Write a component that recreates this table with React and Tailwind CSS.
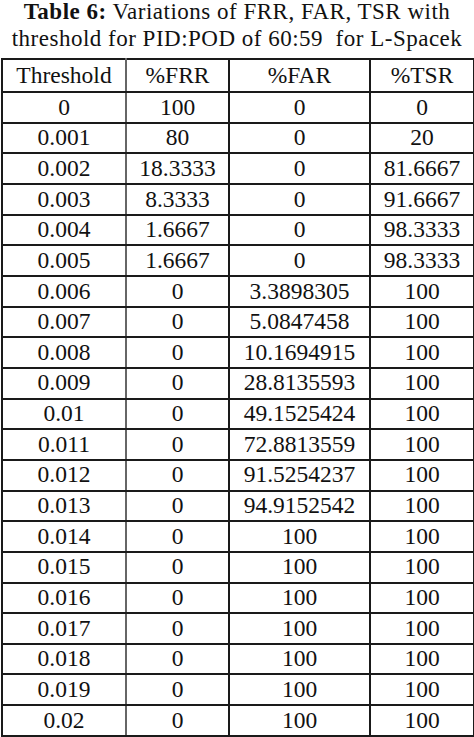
import React from "react";

const rows = [
  ["0", "100", "0", "0"],
  ["0.001", "80", "0", "20"],
  ["0.002", "18.3333", "0", "81.6667"],
  ["0.003", "8.3333", "0", "91.6667"],
  ["0.004", "1.6667", "0", "98.3333"],
  ["0.005", "1.6667", "0", "98.3333"],
  ["0.006", "0", "3.3898305", "100"],
  ["0.007", "0", "5.0847458", "100"],
  ["0.008", "0", "10.1694915", "100"],
  ["0.009", "0", "28.8135593", "100"],
  ["0.01", "0", "49.1525424", "100"],
  ["0.011", "0", "72.8813559", "100"],
  ["0.012", "0", "91.5254237", "100"],
  ["0.013", "0", "94.9152542", "100"],
  ["0.014", "0", "100", "100"],
  ["0.015", "0", "100", "100"],
  ["0.016", "0", "100", "100"],
  ["0.017", "0", "100", "100"],
  ["0.018", "0", "100", "100"],
  ["0.019", "0", "100", "100"],
  ["0.02", "0", "100", "100"],
];

const cell = "border-2 border-[#1a1a1a] text-center p-0 align-middle";

export default function App() {
  return (
    <div className="w-[474px] h-[737px] bg-white overflow-hidden text-[#111] [font-family:'Liberation_Serif','Times_New_Roman',serif]">
      {/* caption */}
      <div className="mb-[8px] text-center text-[23px] leading-[23px] tracking-[0.5px]">
        <div>
          <b>Table 6:</b> Variations of FRR, FAR, TSR with
        </div>
        <div className="mt-[4px]">threshold for PID:POD of 60:59&nbsp; for L-Spacek</div>
      </div>

      <table className="ml-[1px] w-[472px] table-fixed border-collapse text-[23.5px] leading-none">
        <colgroup>
          <col className="w-[124px]" />
          <col className="w-[103px]" />
          <col className="w-[141px]" />
          <col className="w-[104px]" />
        </colgroup>
        <thead>
          <tr className="h-[33px]">
            <th className={cell + " font-normal border-r-[#666]"}>Threshold</th>
            <th className={cell + " font-normal"}>%FRR</th>
            <th className={cell + " font-normal"}>%FAR</th>
            <th className={cell + " font-normal"}>%TSR</th>
          </tr>
        </thead>
        <tbody>
          {rows.map((r) => (
            <tr key={r[0]} className="h-[30.67px]">
              <td className={cell + " border-r-[#666]"}>{r[0]}</td>
              <td className={cell}>{r[1]}</td>
              <td className={cell}>{r[2]}</td>
              <td className={cell}>{r[3]}</td>
            </tr>
          ))}
        </tbody>
      </table>
    </div>
  );
}
